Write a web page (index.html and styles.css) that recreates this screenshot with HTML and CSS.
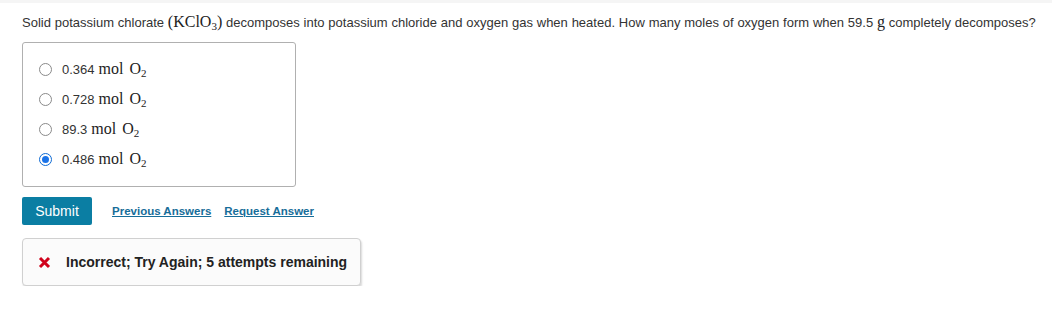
FILE: index.html
```html
<!DOCTYPE html>
<html>
<head>
<meta charset="utf-8">
<link rel="stylesheet" href="styles.css">
</head>
<body>
<div class="topband"></div>
<div class="page">
  <p class="question">Solid potassium chlorate <span class="math">(KClO<sub>3</sub>)</span> decomposes into potassium chloride and oxygen gas when heated. How many moles of oxygen form when 59.5 <span class="math">g</span> completely decomposes?</p>
  <div class="choices">
    <label class="choice"><span class="radio"></span><span class="num">0.364</span><span class="math">mol</span><span class="math o">O<sub>2</sub></span></label>
    <label class="choice"><span class="radio"></span><span class="num">0.728</span><span class="math">mol</span><span class="math o">O<sub>2</sub></span></label>
    <label class="choice"><span class="radio"></span><span class="num">89.3</span><span class="math">mol</span><span class="math o">O<sub>2</sub></span></label>
    <label class="choice"><span class="radio checked"></span><span class="num">0.486</span><span class="math">mol</span><span class="math o">O<sub>2</sub></span></label>
  </div>
  <div class="actions">
    <button class="submit">Submit</button>
    <a class="link" href="#">Previous Answers</a>
    <a class="link" href="#">Request Answer</a>
  </div>
  <div class="feedback">
    <svg class="xicon" width="13" height="13" viewBox="0 0 13 13"><path d="M2 2 L11 11 M11 2 L2 11" stroke="#d0021b" stroke-width="3" stroke-linecap="butt"/></svg>
    <span>Incorrect; Try Again; 5 attempts remaining</span>
  </div>
</div>
</body>
</html>
```
FILE: styles.css
```css
html, body { margin: 0; padding: 0; background: #fff; }
body { font-family: "Liberation Sans", Arial, sans-serif; color: #333; }
.topband { height: 3px; background: #f5f5f5; }
.page { padding: 0 22px; }
.question { margin: 0; padding-top: 10px; font-size: 13px; line-height: 18px; color: #333; white-space: nowrap; word-spacing: 0.2px; }
.question .math { font-size: 16px; }
.math { font-family: "Liberation Serif", "Times New Roman", serif; font-size: 16px; color: #222; }
.math sub { font-size: 11px; vertical-align: -3px; line-height: 0; }
.choices { margin-top: 10px; width: 274px; border: 1px solid #b0b0b0; border-radius: 3px; padding: 11px 0 12px 0; box-sizing: border-box; }
.choice { display: flex; align-items: center; height: 30px; padding-left: 16px; font-size: 13px; color: #333; }
.radio { width: 11px; height: 11px; border: 1px solid #8a8a8a; border-radius: 50%; margin-right: 10px; box-sizing: content-box; background: #fff; position: relative; }
.radio.checked { border-color: #0f6bd4; }
.radio.checked::after { content: ""; position: absolute; left: 2px; top: 2px; width: 7px; height: 7px; border-radius: 50%; background: #1a73e8; }
.num { margin-right: 4px; }
.choice .math { font-size: 16px; margin-right: 6px; }
.actions { display: flex; align-items: center; margin-top: 10px; }
.submit { background: #0b7ea3; color: #fff; border: none; border-radius: 2px; font-family: "Liberation Sans", Arial, sans-serif; font-size: 14px; width: 70px; height: 28px; padding: 0; margin-right: 20px; }
.link { color: #176d99; font-size: 11.5px; font-weight: bold; text-decoration: underline; margin-right: 13px; }
.feedback { margin-top: 13px; width: 339px; height: 48px; box-sizing: border-box; border: 1px solid #d0d0d0; border-radius: 4px; box-shadow: 1px 2px 2px rgba(0,0,0,0.15); background: #fbfbfb; display: flex; align-items: center; padding-left: 15px; font-size: 14px; font-weight: bold; color: #222; }
.xicon { margin-right: 15px; }
```
